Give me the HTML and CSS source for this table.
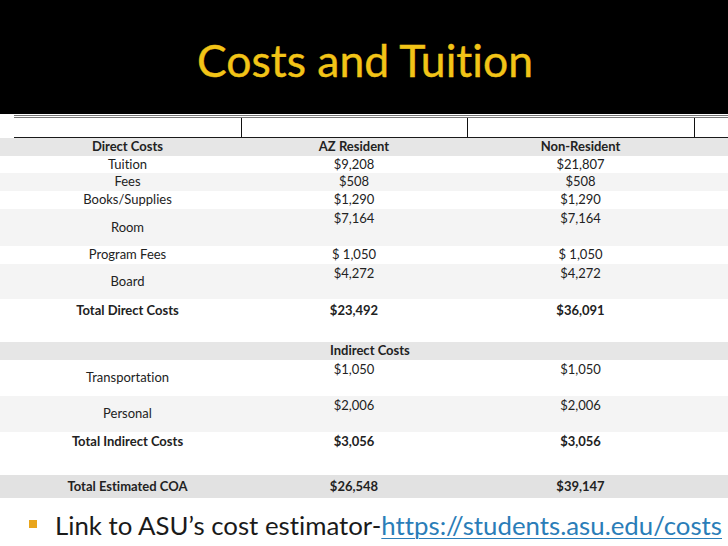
FILE: index.html
```html
<!DOCTYPE html>
<html>
<head>
<meta charset="utf-8">
<link rel="stylesheet" href="styles.css">
</head>
<body>
<div class="slide">
  <header class="title-bar">
    <h1 class="title">Costs and Tuition</h1>
  </header>
  <div class="ruler">
    <div class="ruler-cell"></div>
    <div class="ruler-cell"></div>
    <div class="ruler-cell"></div>
    <div class="ruler-cell"></div>
  </div>
  <div class="table">
    <div class="row hdr h18 bold"><div></div><div class="c">Direct Costs</div><div class="c">AZ Resident</div><div class="c">Non-Resident</div><div></div></div>
    <div class="row h17"><div></div><div class="c">Tuition</div><div class="c">$9,208</div><div class="c">$21,807</div><div></div></div>
    <div class="row alt h18"><div></div><div class="c">Fees</div><div class="c">$508</div><div class="c">$508</div><div></div></div>
    <div class="row h18"><div></div><div class="c">Books/Supplies</div><div class="c">$1,290</div><div class="c">$1,290</div><div></div></div>
    <div class="row alt h37"><div></div><div class="c mid">Room</div><div class="c top">$7,164</div><div class="c top">$7,164</div><div></div></div>
    <div class="row h18"><div></div><div class="c">Program Fees</div><div class="c">$ 1,050</div><div class="c">$ 1,050</div><div></div></div>
    <div class="row alt h35"><div></div><div class="c mid">Board</div><div class="c top">$4,272</div><div class="c top">$4,272</div><div></div></div>
    <div class="row h24 bold"><div></div><div class="c">Total Direct Costs</div><div class="c">$23,492</div><div class="c">$36,091</div><div></div></div>
    <div class="row h19"><div></div><div></div><div></div><div></div><div></div></div>
    <div class="row hdr h18 bold"><div></div><div></div><div class="indirect">Indirect Costs</div><div></div><div></div></div>
    <div class="row h36"><div></div><div class="c mid">Transportation</div><div class="c top">$1,050</div><div class="c top">$1,050</div><div></div></div>
    <div class="row alt h36"><div></div><div class="c mid">Personal</div><div class="c top">$2,006</div><div class="c top">$2,006</div><div></div></div>
    <div class="row h43 bold"><div></div><div class="c top">Total Indirect Costs</div><div class="c top">$3,056</div><div class="c top">$3,056</div><div></div></div>
    <div class="row total h23 bold"><div></div><div class="c">Total Estimated COA</div><div class="c">$26,548</div><div class="c">$39,147</div><div></div></div>
  </div>
  <div class="bullet-line">
    <span class="bullet"></span>
    <p class="bullet-text">Link to ASU’s cost estimator-<a class="link" href="#">https://students.asu.edu/costs</a></p>
  </div>
</div>
</body>
</html>
```

FILE: styles.css
```css
html, body {
  margin: 0;
  padding: 0;
  background: #ffffff;
}

.slide {
  width: 728px;
  height: 546px;
  overflow: hidden;
  font-family: Lato, "Open Sans", sans-serif;
  font-variant-ligatures: none;
  color: #222222;
}

.title-bar {
  background: #000000;
  height: 114px;
  box-sizing: border-box;
  padding-top: 38px;
}

.title {
  margin: 0;
  text-align: center;
  font-family: Lato, sans-serif;
  font-weight: 400;
  font-size: 44.5px;
  line-height: 44px;
  color: #f2c417;
  padding-left: 2px;
  -webkit-text-stroke: 0.4px #f2c417;
}

.ruler {
  height: 23px;
  display: grid;
  grid-template-columns: 227px 226px 227px 34px;
  margin-left: 14px;
  border-top: 3px double #777777;
  border-bottom: 1px solid #1a1a1a;
  box-sizing: border-box;
  margin-top: 1px;
}

.ruler-cell + .ruler-cell {
  border-left: 1px solid #111111;
}

.table {
  display: flex;
  flex-direction: column;
}

.row {
  display: grid;
  grid-template-columns: 14px 227px 226px 227px 34px;
  font-size: 13px;
  line-height: 17px;
  background: #ffffff;
}

.row.alt { background: #f4f4f4; }
.row.hdr { background: #e6e6e6; }
.row.total { background: #e2e2e2; }
.row.bold { font-weight: 700; }

.h17 { height: 17px; }
.h18 { height: 18px; }
.h19 { height: 19px; }
.h23 { height: 23px; }
.h24 { height: 24px; }
.h35 { height: 35px; }
.h36 { height: 36px; }
.h37 { height: 37px; }
.h43 { height: 43px; }

.c {
  text-align: center;
  align-self: center;
  margin-top: -1px;
}

.c.top {
  align-self: start;
  margin-top: 1px;
}

.c.mid {
  align-self: center;
}

.indirect {
  align-self: center;
  padding-left: 89px;
  margin-top: -1px;
}

.bullet-line {
  display: flex;
  align-items: center;
  gap: 18px;
  padding-left: 29px;
  margin-top: 12px;
}

.bullet {
  width: 8px;
  height: 8px;
  background: #e9a51b;
  flex: none;
  margin-top: -2px;
}

.bullet-text {
  margin: 0;
  font-size: 25.8px;
  line-height: 30px;
  color: #1a1a1a;
  white-space: nowrap;
}

.link {
  color: #2a7db8;
  text-decoration: underline;
  text-decoration-thickness: 1px;
  text-underline-offset: 3px;
}
```
